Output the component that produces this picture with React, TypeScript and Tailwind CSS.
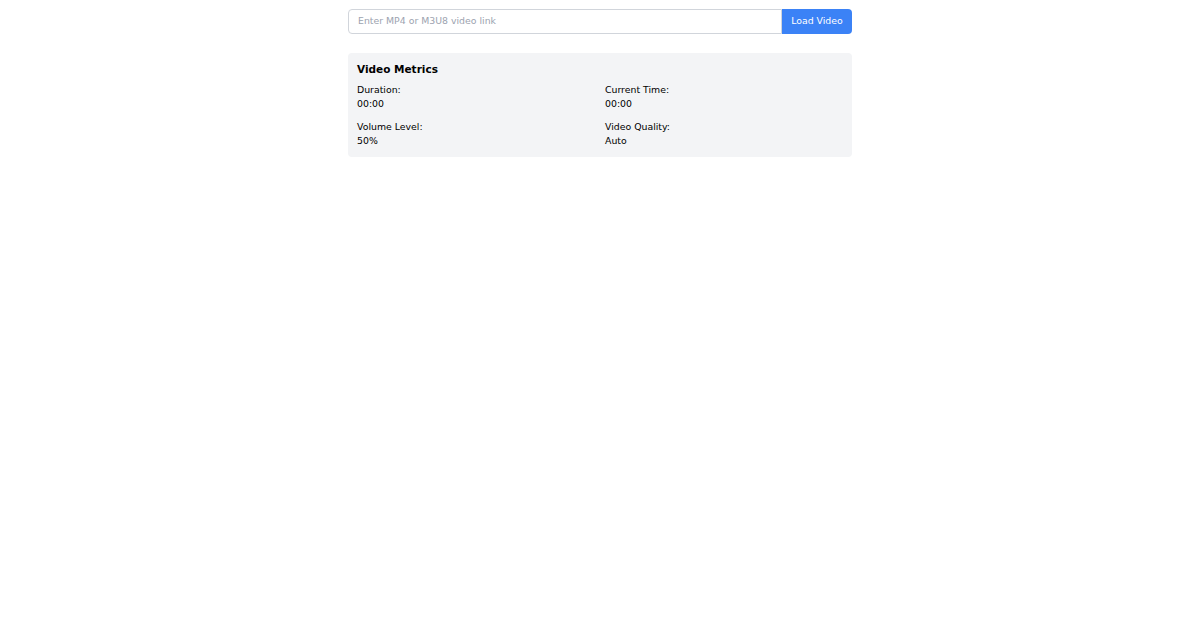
export default function App() {
  return (
    <div className="min-h-screen bg-white font-['DejaVu_Sans',sans-serif] text-black">
      <div className="mx-auto w-[504px] pt-[9px]">
        <div className="flex h-[25px]">
          <input
            type="text"
            placeholder="Enter MP4 or M3U8 video link"
            className="flex-1 rounded-l-[4px] border border-[#d1d5db] px-[9px] text-[9.35px] outline-none placeholder:text-[#9ca3af]"
          />
          <button className="w-[70px] rounded-r-[4px] bg-[#3b82f6] text-[9.35px] text-white">
            Load Video
          </button>
        </div>

        <div className="mt-[19px] rounded-[4px] bg-[#f3f4f6] p-[9px]">
          <h2 className="text-[10.5px] font-bold leading-[15px]">Video Metrics</h2>
          <div className="mt-[6px] grid grid-cols-2 gap-x-[10px] gap-y-[9px] text-[9.35px] leading-[14px]">
            <div>
              <div>Duration:</div>
              <div>00:00</div>
            </div>
            <div>
              <div>Current Time:</div>
              <div>00:00</div>
            </div>
            <div>
              <div>Volume Level:</div>
              <div>50%</div>
            </div>
            <div>
              <div>Video Quality:</div>
              <div>Auto</div>
            </div>
          </div>
        </div>
      </div>
    </div>
  );
}
